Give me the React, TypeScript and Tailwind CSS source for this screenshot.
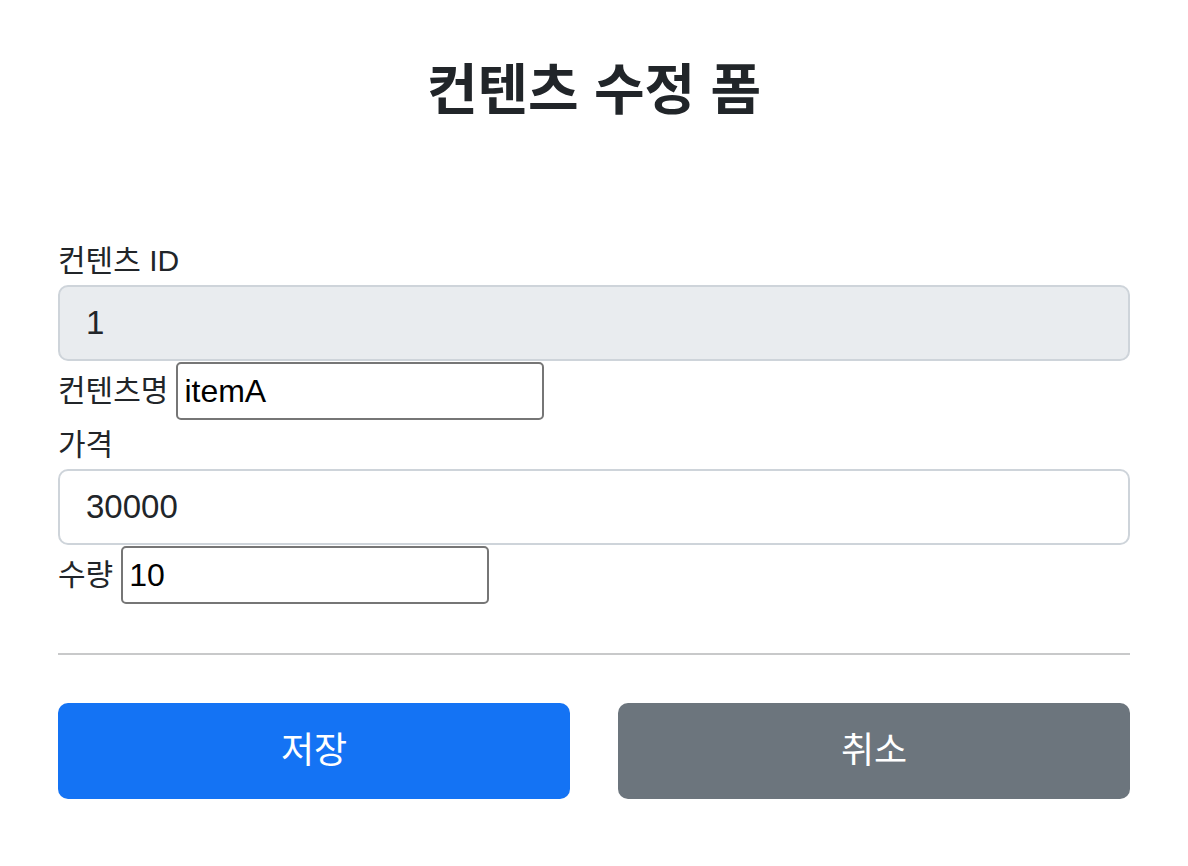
const font = { fontFamily: '"Liberation Sans", "Noto Sans CJK KR", sans-serif' };

function InlineField({ label, value }: { label: string; value: string }) {
  return (
    <div className="flex h-[60px] items-center gap-[8px]">
      <label className="text-[30px] leading-[48px] text-[#212529]">{label}</label>
      <input
        type="text"
        defaultValue={value}
        className="box-border h-[58px] w-[368px] rounded-[5px] border-2 border-[#767676] bg-white px-[6px] text-[32px] text-black outline-none"
        style={font}
      />
    </div>
  );
}

export default function App() {
  return (
    <div className="min-h-screen bg-white text-[#212529]" style={font}>
      <div className="mx-auto max-w-[1120px] px-6">
        <div className="pb-[116px] pt-[59px] text-center">
          <h2 className="text-[55px] font-bold leading-[62px]">컨텐츠 수정 폼</h2>
        </div>

        <form>
          <label className="block text-[30px] leading-[48px]">컨텐츠 ID</label>
          <input
            type="text"
            readOnly
            defaultValue="1"
            className="box-border block h-[76px] w-full rounded-[10px] border-2 border-[#ced4da] bg-[#e9ecef] px-[26px] text-[33px] text-[#212529] outline-none"
            style={font}
          />

          <InlineField label="컨텐츠명" value="itemA" />

          <label className="block text-[30px] leading-[48px]">가격</label>
          <input
            type="text"
            defaultValue="30000"
            className="box-border block h-[76px] w-full rounded-[10px] border-2 border-[#ced4da] bg-white px-[26px] text-[33px] text-[#212529] outline-none"
            style={font}
          />

          <InlineField label="수량" value="10" />

          <hr className="my-[48px] border-t-2 border-[#c8c9ca]" />

          <div className="grid grid-cols-2 gap-[48px]">
            <button
              type="button"
              className="h-[96px] rounded-[10px] bg-[#1473f4] text-[36px] text-white"
            >
              저장
            </button>
            <button
              type="button"
              className="h-[96px] rounded-[10px] bg-[#6c757d] text-[36px] text-white"
            >
              취소
            </button>
          </div>
        </form>
      </div>
    </div>
  );
}
